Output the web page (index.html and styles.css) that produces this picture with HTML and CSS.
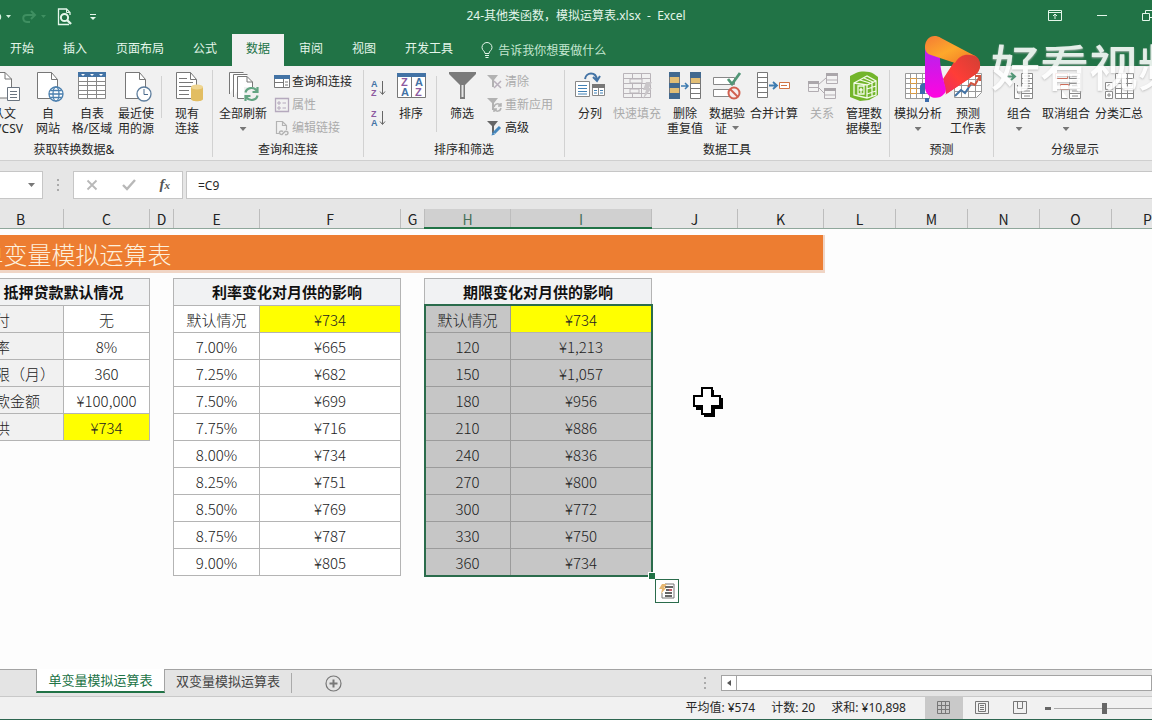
FILE: index.html
```html
<!DOCTYPE html>
<html lang="zh-CN">
<head>
<meta charset="utf-8">
<title>24-其他类函数，模拟运算表.xlsx - Excel</title>
<link rel="stylesheet" href="styles.css">
</head>
<body>
<div class="app">
  <header class="top">
    <div class="titlebar">
      <div class="quick">
        <button class="qbtn undo" aria-label="撤消"><svg width="14" height="16" viewBox="0 0 14 16"><path d="M-1 5c3 1 3 5 0 6" fill="none" stroke="#d5f0de" stroke-width="2"/><path d="M7 6h5l-2.500 3z" fill="#d5f0de"/></svg></button>
        <button class="qbtn" aria-label="恢复"><svg width="28" height="16" viewBox="0 0 28 16"><path d="M9 13H6C1 12 1 6 6 6h7M10 2l4 4-4 4" fill="none" stroke="#3f8f61" stroke-width="2"/><path d="M20 6h5l-2.500 3z" fill="#3f8f61"/></svg></button>
        <button class="qbtn" aria-label="打印预览"><svg width="16" height="18" viewBox="0 0 16 18" fill="none" stroke="#e4f6ea"><path d="M13 7V4.500L9.500 1H1.500v15.500H12" stroke-width="1.300"/><path d="M9.500 1v3.500H13"/><circle cx="7.500" cy="9.500" r="3.600" stroke-width="2"/><path d="M10 12l4 4" stroke-width="2.400"/></svg></button>
        <button class="qbtn more" aria-label="自定义"><svg width="8" height="8" viewBox="0 0 8 8"><path d="M1 1.500h6" stroke="#e4f6ea"/><path d="M1 4h6L4 7z" fill="#e4f6ea"/></svg></button>
      </div>
      <div class="doc">24-其他类函数，模拟运算表.xlsx&nbsp; -&nbsp; Excel</div>
      <div class="window">
        <button aria-label="功能区选项"><svg width="14" height="11" viewBox="0 0 14 11" fill="none" stroke="#e4f6ea"><path d="M.5.5h13v10H.5zM.5 2.500h13M7 9V4M5 6l2-2 2 2"/></svg></button>
        <button aria-label="最小化"><svg width="12" height="11" viewBox="0 0 12 11"><path d="M1 5.500h10" stroke="#e4f6ea"/></svg></button>
        <button aria-label="还原"><svg width="12" height="11" viewBox="0 0 12 11" fill="none" stroke="#e4f6ea"><path d="M.5 3.500h7v7h-7zM3.500 3V.5h8v7H8"/></svg></button>
      </div>
    </div>
    <nav class="tabs">
      <button>开始</button><button>插入</button><button>页面布局</button><button>公式</button><button class="active">数据</button><button>审阅</button><button>视图</button><button>开发工具</button>
      <label class="tell"><svg width="12" height="17" viewBox="0 0 12 17" fill="none" stroke="#e4f6ea"><path d="M4 11.500C4 9 1 8.500 1 5.500a5 5 0 0 1 10 0c0 3-3 3.500-3 6zM4 13.500h4M4.500 15.500h3"/></svg><input type="text" placeholder="告诉我你想要做什么"></label>
    </nav>
  </header>

  <section class="ribbon">
    <div class="group g1">
      <div class="tools">
        <button class="big w44"><svg width="32" height="32" viewBox="0 0 32 32" fill="#fff" stroke="#777"><path d="M1.500 2.500H17L23.500 9v19h-22z"/><path d="M17 2.500V9h6.500" fill="none"/><path d="M19.500 17.500h12v13h-12zM22 21.500h7M22 24.500h7M22 27.500h7" stroke="#6a7480"/></svg><span>从文<br>本/CSV</span></button>
        <button class="big w44"><svg width="32" height="32" viewBox="0 0 32 32" fill="#fff" stroke="#777"><path d="M5.500 2.500h14l6 7v19h-20z"/><path d="M19.500 2.500v7h6" fill="none"/><g stroke="#4a7fae" stroke-width="1.300"><circle cx="24" cy="24" r="7"/><ellipse cx="24" cy="24" rx="3" ry="7"/><path d="M17 24h14M18.500 20.500h11M18.500 27.500h11"/></g></svg><span>自<br>网站</span></button>
        <button class="big w44"><svg width="32" height="32" viewBox="0 0 32 32" fill="#fff" stroke="#888"><path d="M2.500 2.500h27v26h-27z"/><path d="M2 2h28v5H2z" fill="#4373a5" stroke="none"/><path d="M2.500 11.500h27M2.500 15.500h27M2.500 20.500h27M2.500 24.500h27M11.500 7v21M20.500 7v21"/><path d="M5 4h4L7 6zM14 4h4l-2 2zM23 4h4l-2 2z" stroke="none"/></svg><span>自表<br>格/区域</span></button>
        <button class="big w44"><svg width="32" height="32" viewBox="0 0 32 32" fill="#fff" stroke="#777"><path d="M5.500 2.500h14l6 7v19h-20z"/><path d="M19.500 2.500v7h6" fill="none"/><circle cx="24" cy="24" r="7" stroke="#5d7d9d" stroke-width="1.300"/><path d="M24 19v5.500h4" fill="none" stroke="#4a6a8c"/></svg><span>最近使<br>用的源</span></button>
        <i class="rule short"></i>
        <button class="big w44"><svg width="32" height="32" viewBox="0 0 32 32" fill="#fff" stroke="#777"><path d="M5.500 2.500h14l6 7v19h-20z"/><path d="M19.500 2.500v7h6M8 8.500h8M8 12.500h14M8 16.500h14M8 20.500h10M8 24.500h10" fill="none"/><path d="M20 17v12c0 3 12 3 12 0V17z" fill="#e2bd62" stroke="none"/><ellipse cx="26" cy="17" rx="6" ry="2.500" fill="#efd591" stroke="none"/></svg><span>现有<br>连接</span></button>
      </div>
      <h2>获取转换数据&amp;</h2>
    </div>
    <div class="group g2">
      <div class="tools">
        <button class="big w54"><svg width="32" height="32" viewBox="0 0 32 32" fill="#fff" stroke="#777"><path d="M2.500 24V2.500h14M6.500 27V4.500h14M10.500 6.500H20l5.500 5.500v16.500h-15z"/><path d="M20 6.500V12h5.500" fill="none"/><path d="M17 17h15v14H17z" fill="#f1f1f1" stroke="none"/><path d="M18.500 22.500c1-5 8-6 11-2M30.500 17v5h-5M30.500 25.500c-1 5-8 6-11 2M18.500 31v-5h5" fill="none" stroke="#64a583" stroke-width="2.200"/></svg><span>全部刷新</span><b class="caret"></b></button>
        <div class="stack">
          <button><svg width="16" height="16" viewBox="0 0 16 16" fill="#fff" stroke="#777"><path d="M.5 1.500h15v12H.5z"/><path d="M0 1h16v4H0z" fill="#4373a5" stroke="none"/><path d="M9.500 5v8.500M.5 8.500h9M11 8h3M11 11h3" fill="none"/></svg>查询和连接</button>
          <button disabled><svg width="16" height="16" viewBox="0 0 16 16" fill="none" stroke="#b5a9bd"><path d="M1.500 1.500h13v13h-13z" stroke-width="1.300"/><path d="M4 5h2v2H4zM4 10h2v2H4zM8.500 6H12M8.500 11H12"/></svg>属性</button>
          <button disabled><svg width="16" height="16" viewBox="0 0 16 16" fill="none" stroke="#b3b3b3"><path d="M5 13.500H2.500V1.500h6l4 4V10M8.500 1.500v4h4" stroke-width="1.200"/><path d="M9 11.500c-4-2-5 3-1 3l3-3c4-1 4 4 0 3" stroke-width="1.500"/></svg>编辑链接</button>
        </div>
      </div>
      <h2>查询和连接</h2>
    </div>
    <div class="group g3">
      <div class="tools">
        <div class="sorts">
          <button aria-label="升序"><svg width="16" height="18" viewBox="0 0 16 18"><text class="az blue" x="0" y="8">A</text><text class="az purple" x="0" y="17">Z</text><path d="M11.500 2v13M9 12.500l2.500 3 2.500-3" fill="none" stroke="#666"/></svg></button>
          <button aria-label="降序"><svg width="16" height="18" viewBox="0 0 16 18"><text class="az purple" x="0" y="8">Z</text><text class="az blue" x="0" y="17">A</text><path d="M11.500 2v13M9 12.500l2.500 3 2.500-3" fill="none" stroke="#666"/></svg></button>
        </div>
        <button class="big w44"><svg width="32" height="32" viewBox="0 0 32 32" fill="#fff" stroke="#777"><path d="M2.500 3.500h28v24h-28zM16.500 6v21"/><path d="M2 3h29v4H2z" fill="#4373a5" stroke="none"/><g stroke="none"><text class="za purple" x="6" y="16">Z</text><text class="za blue" x="6" y="26">A</text><text class="za blue" x="20" y="16">A</text><text class="za purple" x="20" y="26">Z</text></g></svg><span>排序</span></button>
        <i class="rule"></i>
        <button class="big w44"><svg width="32" height="32" viewBox="0 0 32 32"><path d="M3 2h27v2L19 15v14h-5V15L3 4z" fill="#7b7b7b"/><path d="M16.500 15v12" stroke="#e5e5e5" stroke-width="2"/></svg><span>筛选</span></button>
        <div class="stack">
          <button disabled><svg width="16" height="16" viewBox="0 0 16 16"><path d="M0 1h11L7 6v7H5V6z" fill="#b2b2b2"/><path d="M7 7l7 7M14 7l-7 7" stroke="#b9b0bc" stroke-width="1.500"/></svg>清除</button>
          <button disabled><svg width="16" height="16" viewBox="0 0 16 16"><path d="M0 1h11L7 6v7H5V6z" fill="#b2b2b2"/><path d="M7 10c1-4 5-4 7-1M14 6v3h-3M14 11c-1 4-5 4-7 1M7 15v-3h3" fill="none" stroke="#b2b2b2" stroke-width="1.500"/></svg>重新应用</button>
          <button><svg width="16" height="16" viewBox="0 0 16 16"><path d="M0 1h11L7 6v7H5V6z" fill="#666"/><path d="M7 13l6-6" stroke="#4587bd" stroke-width="3"/><path d="M4.500 15.500l1-3.500 2.500 2.500z" fill="#4587bd"/></svg>高级</button>
        </div>
      </div>
      <h2>排序和筛选</h2>
    </div>
    <div class="group g4">
      <div class="tools">
        <button class="big w44"><svg width="32" height="32" viewBox="0 0 32 32" fill="#fff" stroke="#888"><path d="M1.500 11.500h14v15h-14zM18.500 15.500h12v10h-12zM24.500 17v8"/><path d="M18 14h13v4H18z" fill="#777" stroke="none"/><path d="M4 15.500h9M4 18.500h9M4 21.500h9M4 24h9M20 20.500h3M20 23h3M26 20.500h3M26 23h3" stroke="#4382b6"/><path d="M11 9c1-7 11-8 12 1M19 7l4 4 3-5" fill="none" stroke="#4373a5" stroke-width="2"/></svg><span>分列</span></button>
        <button class="big w50" disabled><svg width="32" height="32" viewBox="0 0 32 32" fill="none" stroke="#b9b4b9"><path d="M2.500 3.500h27v24h-27zM2.500 8.500h27M2.500 13.500h27M2.500 18.500h27M2.500 23.500h27M11.500 3v24M20.500 3v24"/><path d="M9 9h12v4H9zM9 19h9v4H9z" fill="#f1f1f1"/><path d="M25 12h6l-3 6h3l-9 11 3-9h-3z" fill="#c9c6c9" stroke="none"/></svg><span>快速填充</span></button>
        <button class="big w46"><svg width="32" height="32" viewBox="0 0 32 32" fill="#fff" stroke="#777"><path d="M.5 2.500h10v26H.5z" fill="#e2be75"/><path d="M21.500 2.500h10v26h-10z"/><path d="M0 2h11v5H0zM0 13h11v5H0zM0 23h11v6H0zM21 2h11v6H21z" fill="#42698f" stroke="none"/><path d="M22 8h9v5h-9z" fill="#e2be75" stroke="none"/><path d="M22 13.500h9M22 18.500h9M22 23.500h9"/><path d="M12 16h7M16 13l3 3-3 3" fill="none" stroke="#3e7cb1" stroke-width="1.500"/></svg><span>删除<br>重复值</span></button>
        <button class="big w38"><svg width="32" height="32" viewBox="0 0 32 32" fill="#fff" stroke="#888"><path d="M2.500 7.500h21v7h-21zM2.500 19.500h16v7h-16z"/><path d="M17 9l4 5 8-11" fill="none" stroke="#519676" stroke-width="2.800"/><circle cx="23" cy="23" r="5.500" stroke="#d16150" stroke-width="2" fill="#f7eeee"/><path d="M19 19l8 8" stroke="#d16150" stroke-width="2"/></svg><span>数据验<br>证 <b class="caret inline"></b></span></button>
        <button class="big w56"><svg width="34" height="32" viewBox="0 0 34 32" fill="#fff" stroke="#777"><path d="M.5 2.500h10v25H.5zM.5 7.500h10M.5 12.500h10M.5 17.500h10M.5 22.500h10"/><path d="M22.500 12.500h10v6h-10z" stroke="#d07444"/><path d="M24 15.500h6" stroke="#d07444"/><path d="M12 15.500h7M16 12l4 3.500-4 3.500" fill="none" stroke="#3e7cb1" stroke-width="1.800"/></svg><span>合并计算</span></button>
        <button class="big w40" disabled><svg width="32" height="32" viewBox="0 0 32 32" fill="#f3f3f3" stroke="#b2adb2"><path d="M12 15l8-7M12 17l6 6"/><path d="M2.500 11.500h10v10h-10zM20.500 3.500h11v10h-11zM18.500 18.500h11v10h-11zM2.500 17.500h10M20.500 10h11M18.500 25h11"/><path d="M2 11h11v3H2zM20 3h12v3H20zM18 18h12v3H18z" fill="#aaa6aa" stroke="none"/></svg><span>关系</span></button>
        <button class="big w44"><svg width="32" height="32" viewBox="0 0 32 32"><path d="M2 6l6-3c5-2 13-2 18 1l4 3v18l-9 5-9 1L2 27z" fill="#73b52b"/><path d="M6 13l13-7 9 5v14l-9 3-13-3zM6 13l13 2 9-4M19 15v13M24 13v13M19 19l9-3M19 24l9-3M12 10l10 3M16 8l9 4M10 16h6v8h-6zM13 23v-4M11.500 20.500l1.500-2 1.500 2" fill="none" stroke="#f2fae7" stroke-width="1.300"/></svg><span>管理数<br>据模型</span></button>
      </div>
      <h2>数据工具</h2>
    </div>
    <div class="group g5">
      <div class="tools">
        <button class="big w50"><svg width="32" height="32" viewBox="0 0 32 32" fill="#fff" stroke="#999"><path d="M3.500 3.500h24v25h-24zM3.500 8.500h24M3.500 13.500h24M3.500 18.500h24M3.500 23.500h24M8.500 3v25M14.500 3v25M20.500 3v25"/><path d="M8.500 8.500h6v5h-6zM8.500 18.500h6v5h-6z" stroke="#d99a43"/><path d="M18 17c0-3 2-4 5-4v11h-5zM23 28h4v4h-4z" fill="#3d6cab" stroke="none"/></svg><span>模拟分析</span><b class="caret"></b></button>
        <button class="big w50"><svg width="32" height="32" viewBox="0 0 32 32" fill="#fff" stroke="#999"><path d="M2.500 3.500h27v19l-5 5h-22zM2.500 9.500h27M2.500 15.500h27M2.500 21.500h27M9.500 3v24M16.500 3v24M23.500 3v24"/><path d="M3 26l6-6 4 3 6-9" fill="none" stroke="#4373a5" stroke-width="2"/><path d="M16 17l3-4 4 2 5-9M23 6h5v5" fill="none" stroke="#d15540" stroke-width="2"/></svg><span>预测<br>工作表</span></button>
      </div>
      <h2>预测</h2>
    </div>
    <div class="group g6">
      <div class="tools">
        <button class="big w44"><svg width="32" height="32" viewBox="0 0 32 32" fill="#fff" stroke="#888"><path d="M18.500 3.500h11v25h-11zM18.500 8.500h11M18.500 13.500h11M18.500 18.500h11M18.500 23.500h11M11.500 13v15.500h5M14.500 15v8h3"/><path d="M21 11h6M21 16h6M21 21h6M21 26h6M21 6h6"/><path d="M4 6.500h8M8 3l4 3.500L8 10" fill="none" stroke="#519676" stroke-width="2"/></svg><span>组合</span><b class="caret"></b></button>
        <button class="big w50"><svg width="32" height="32" viewBox="0 0 32 32" fill="#fff" stroke="#888"><path d="M19.500 3.500h11v25h-11zM19.500 8.500h11M19.500 13.500h11M19.500 18.500h11M19.500 23.500h11M22 6h6M22 11h6M22 16h6M22 21h6M22 26h6M11.500 20v8.500h6"/><path d="M5.500 3.500h12v5h-12zM10.500 14.500h8v5h-8z" stroke="#cf6652"/></svg><span>取消组合</span><b class="caret"></b></button>
        <button class="big w56"><svg width="32" height="32" viewBox="0 0 32 32" fill="#fff" stroke="#888"><path d="M12.500 3.500h18v25h-18zM12.500 8.500h18M12.500 13.500h18M12.500 18.500h18M12.500 23.500h18M18.500 3v25M24.500 3v25M2.500 12.500h7v7h-7zM2.500 21.500h7v7h-7zM4 16h4M6 14v4M4 25h4M6 23v4"/></svg><span>分类汇总</span></button>
      </div>
      <h2>分级显示</h2>
    </div>
  </section>

  <div class="formula">
    <button class="name" aria-label="名称框"><b class="caret"></b></button>
    <i class="dots"></i>
    <div class="fx">
      <button aria-label="取消"><svg width="12" height="12" viewBox="0 0 12 12"><path d="M1.500 1.500l9 9M10.500 1.500l-9 9" stroke="#b8b8b8" stroke-width="1.800"/></svg></button>
      <button aria-label="输入"><svg width="14" height="12" viewBox="0 0 14 12"><path d="M1 6l4 4 8-9" fill="none" stroke="#b8b8b8" stroke-width="2.400"/></svg></button>
      <button class="fn" aria-label="插入函数">f<small>x</small></button>
    </div>
    <input class="expr" type="text" value="=C9" aria-label="编辑栏">
  </div>

  <main class="sheet">
    <table class="grid">
      <colgroup><col class="m"><col class="m"><col class="s"><col class="m"><col class="l"><col class="s"><col class="m"><col class="l"><col class="m"><col class="m"><col class="d"><col class="d"><col class="d"><col class="d"><col class="d"></colgroup>
      <thead><tr><th>B</th><th>C</th><th>D</th><th>E</th><th>F</th><th>G</th><th class="on">H</th><th class="on">I</th><th>J</th><th>K</th><th>L</th><th>M</th><th>N</th><th>O</th><th>P</th></tr></thead>
      <tbody>
        <tr class="gap"><td colspan="15"></td></tr>
        <tr class="banner"><td colspan="10">单变量模拟运算表</td><td class="off" colspan="5"></td></tr>
        <tr class="gap"><td colspan="15"></td></tr>
        <tr class="heads"><td class="c h" colspan="2">抵押贷款默认情况</td><td></td><td class="c h" colspan="2">利率变化对月供的影响</td><td></td><td class="c h" colspan="2">期限变化对月供的影响</td></tr>
        <tr><td class="c k">首付</td><td class="c">无</td><td></td><td class="c">默认情况</td><td class="c y">¥734</td><td></td><td class="c sel">默认情况</td><td class="c y">¥734</td></tr>
        <tr><td class="c k">利率</td><td class="c">8%</td><td></td><td class="c">7.00%</td><td class="c">¥665</td><td></td><td class="c sel">120</td><td class="c sel">¥1,213</td></tr>
        <tr><td class="c k">期限（月）</td><td class="c">360</td><td></td><td class="c">7.25%</td><td class="c">¥682</td><td></td><td class="c sel">150</td><td class="c sel">¥1,057</td></tr>
        <tr><td class="c k">贷款金额</td><td class="c">¥100,000</td><td></td><td class="c">7.50%</td><td class="c">¥699</td><td></td><td class="c sel">180</td><td class="c sel">¥956</td></tr>
        <tr><td class="c k">月供</td><td class="c y">¥734</td><td></td><td class="c">7.75%</td><td class="c">¥716</td><td></td><td class="c sel">210</td><td class="c sel">¥886</td></tr>
        <tr><td></td><td></td><td></td><td class="c">8.00%</td><td class="c">¥734</td><td></td><td class="c sel">240</td><td class="c sel">¥836</td></tr>
        <tr><td></td><td></td><td></td><td class="c">8.25%</td><td class="c">¥751</td><td></td><td class="c sel">270</td><td class="c sel">¥800</td></tr>
        <tr><td></td><td></td><td></td><td class="c">8.50%</td><td class="c">¥769</td><td></td><td class="c sel">300</td><td class="c sel">¥772</td></tr>
        <tr><td></td><td></td><td></td><td class="c">8.75%</td><td class="c">¥787</td><td></td><td class="c sel">330</td><td class="c sel">¥750</td></tr>
        <tr><td></td><td></td><td></td><td class="c">9.00%</td><td class="c">¥805</td><td></td><td class="c sel">360</td><td class="c sel">¥734</td></tr>
      </tbody>
    </table>
    <div class="selection"><i class="handle"></i>
      <button class="quickfx" aria-label="快速分析"><svg width="16" height="16" viewBox="0 0 16 16"><path d="M6 1h9v14H3v-5" fill="none" stroke="#777"/><path d="M6 4h8M7 7h3M6 10h7M6 13h7" stroke="#666" stroke-width="2"/><path d="M10 7h3" stroke="#c75b67" stroke-width="2"/><path d="M3 1h5L5 5h2l-5 6 1-5H0z" fill="#e6b873"/></svg></button>
    </div>
    <svg class="cursor" width="32" height="32" viewBox="0 0 32 32"><path d="M13 4h10v8h9v11h-8v8H13v-7H5V13h8z" fill="#000"/><path d="M11 2h10v8h8v10h-8v8H11v-8H3V10h8z" fill="#fff" stroke="#000" stroke-width="2"/></svg>
  </main>

  <footer>
    <div class="sheets">
      <button class="active">单变量模拟运算表</button>
      <button>双变量模拟运算表</button>
      <i class="bar"></i>
      <button class="add" aria-label="新工作表"><svg width="17" height="17" viewBox="0 0 17 17" fill="none" stroke="#777"><circle cx="8.500" cy="8.500" r="7.500" stroke-width="1.200"/><path d="M8.500 4.500v8M4.500 8.500h8" stroke-width="2"/></svg></button>
      <i class="dots"></i>
      <div class="hscroll"><button aria-label="向左滚动"></button><div></div></div>
    </div>
    <div class="status">
      <span>平均值: ¥574</span><span>计数: 20</span><span>求和: ¥10,898</span>
      <div class="views">
        <button class="active" aria-label="普通"><svg width="14" height="14" viewBox="0 0 14 14" fill="none" stroke="#777"><path d="M.5.5h12v12H.5zM4.500 0v13M8.500 0v13M0 4.500h13M0 8.500h13"/></svg></button>
        <button aria-label="页面布局"><svg width="14" height="14" viewBox="0 0 14 14" fill="none" stroke="#777"><path d="M.5.5h13v12H.5zM3.500 2.500h7v8h-7zM5 4.500h4M5 6.500h4M5 8.500h4"/></svg></button>
        <button aria-label="分页预览"><svg width="14" height="14" viewBox="0 0 14 14" fill="none" stroke="#777"><path d="M.5.5h13v12H.5zM4.500.5v7h5v-7"/></svg></button>
      </div>
      <button class="minus" aria-label="缩小"></button>
      <input class="zoom" type="range" value="50" aria-label="缩放">
    </div>
  </footer>

  <div class="mark">
    <svg width="58" height="64" viewBox="0 0 58 64"><defs><linearGradient id="o" x1="0" y1="0" x2="1" y2="1"><stop offset="0" stop-color="#f47b35"/><stop offset=".5" stop-color="#fda82b"/><stop offset="1" stop-color="#f17426"/></linearGradient><linearGradient id="r" x1="1" y1="0" x2="0" y2="1"><stop offset="0" stop-color="#cf4034"/><stop offset=".6" stop-color="#ff3d37"/><stop offset="1" stop-color="#ed2c62"/></linearGradient><linearGradient id="p" x1="0" y1="0" x2="0" y2="1"><stop offset="0" stop-color="#b025ee"/><stop offset="1" stop-color="#ff04e0"/></linearGradient></defs><path d="M23 58L49 20c6 1 9 9 6 15-1 3-3 4-6 6L21 60z" fill="url(#r)"/><path d="M32 24c5-7 12-7 17-4 9 4 9 14 3 19L22 59l-3-15z" fill="url(#r)"/><path d="M1 10v43c1 10 13 13 19 6 2-2 2-5 1-8-2-9-5-17-5-28z" fill="url(#p)"/><path d="M1 12C1 3 9-2 17 3l36 19c-9-4-17-3-22 6L7 20c-4-1-6-4-6-8z" fill="url(#o)"/></svg>
    <span>好看视频</span>
  </div>
</div>
</body>
</html>
```
FILE: styles.css
```css
* { box-sizing: border-box; }
body { margin: 0; overflow: hidden; font: 12px/15px "Noto Sans", "Noto Sans CJK SC", sans-serif; color: #262626; }
button, input { font: inherit; color: inherit; margin: 0; padding: 0; border: 0; background: none; }
h2 { margin: 0; font: inherit; text-align: center; }
svg { display: block; flex: none; }
.app { position: relative; display: flex; flex-direction: column; height: 100vh; overflow: hidden; border-bottom: 1px solid #2d6650; }

.top { background: #217346; color: #e4f6ea; }
.titlebar { display: grid; grid-template-columns: 1fr auto 1fr; align-items: center; height: 34px; }
.quick { display: flex; align-items: center; gap: 8px; margin-left: -1px; }
.quick .more { margin-left: 8px; }
.window { display: flex; justify-content: flex-end; gap: 34px; margin-right: -2px; padding-bottom: 3px; }
.doc { padding-bottom: 4px; }
.tabs { display: flex; gap: 1px; height: 32px; margin-left: -4px; }
.tabs button { padding: 0 14px 3px; }
.tabs .active { background: #f1f1f1; color: #217346; }
.tell { display: flex; align-items: center; gap: 5px; margin-left: 13px; }
.tell input { width: 140px; }
.tell input::placeholder { color: #c4e6d0; opacity: 1; }

.ribbon { display: flex; height: 95px; background: #f1f1f1; border-bottom: 1px solid #cfcfcf; }
.group { display: flex; flex: none; flex-direction: column; justify-content: space-between; margin: 4px 0 3px; border-right: 1px solid #d2d2d2; }
.g1 { width: 277px; margin-left: -64px; }
.g2 { width: 151px; }
.g3 { width: 201px; }
.g4 { width: 325px; }
.g5 { width: 104px; }
.g6 { width: 162px; border: 0; }
.tools { display: flex; padding-left: 3px; }
.g1 .tools { padding-left: 46px; }
.g3 .tools { padding-left: 7px; }
.big { display: flex; flex: none; flex-direction: column; align-items: center; height: 66px; white-space: nowrap; }
.big span { margin-top: 4px; }
.w38 { width: 38px; }
.w40 { width: 40px; }
.w44 { width: 44px; }
.w46 { width: 46px; }
.w50 { width: 50px; }
.w54 { width: 54px; }
.w56 { width: 56px; }
button:disabled { color: #ababab; }
.caret { display: block; flex: none; width: 7px; height: 4px; margin-top: 6px; background: #777; clip-path: polygon(0 0, 100% 0, 50% 100%); }
.caret.inline { display: inline-block; margin: 0 0 3px 2px; }
.rule { width: 1px; height: 56px; margin: 6px 3px 0; background: #d2d2d2; }
.rule.short { height: 42px; }
.stack { display: flex; flex-direction: column; padding-left: 3px; }
.stack button { display: flex; align-items: center; gap: 2px; height: 23px; white-space: nowrap; }
.g2 .stack { padding-left: 4px; }
.sorts { display: flex; flex-direction: column; gap: 12px; width: 18px; padding-top: 9px; }
.az { font: bold 9px "Liberation Sans", sans-serif; }
.za { font: bold 11px "Liberation Sans", sans-serif; }
.blue { fill: #4373a5; }
.purple { fill: #8d5aa0; }

.formula { display: flex; height: 48px; padding: 10px 0; background: #e6e6e6; }
.formula > * { border: 1px solid #c6c6c6; background: #fff; }
.name { display: flex; align-items: center; justify-content: flex-end; width: 43px; padding-right: 7px; }
.formula .name { border-left: 0; }
.name .caret { margin: 0; }
.formula .dots, .dots { width: 2px; height: 12px; border: 0; background: repeating-linear-gradient(#aaa 0 2px, transparent 2px 5px); }
.formula .dots { margin: 8px 14px; }
.fx { display: flex; align-items: center; justify-content: space-around; width: 110px; margin-right: 3px; }
.formula .fn { font: italic bold 15px/15px "Liberation Serif", serif; color: #555; }
.fn small { font-size: 11px; }
.expr { flex: 1; min-width: 0; padding: 0 11px; }
.formula .expr { border-right: 0; }

.sheet { position: relative; flex: 1; min-height: 0; overflow: hidden; background: #fdfdfd; font-family: "Noto Sans CJK SC", sans-serif; }
.grid { width: 1206px; margin-left: -23px; table-layout: fixed; border-collapse: collapse; font-size: 15px; line-height: 20px; color: #222; }
.s { width: 24px; }
.m { width: 86px; }
.l { width: 141px; }
.d { width: 72px; }
.grid th { height: 19px; padding: 2px 0 0; background: #e6e6e6; border: solid #bdbdbd; border-width: 0 1px; border-bottom: 1px solid #8fa79b; font-size: 14px; font-weight: 400; line-height: 15px; }
.grid th.on { background: #d0d0d0; color: #46705a; border-bottom: 2px solid #217346; }
.grid td { height: 27px; padding: 2px 2px 0; font-weight: 300; white-space: nowrap; }
.grid .gap td { height: 7px; padding: 0; }
.grid .banner td { height: 36px; background: #ed7d31; border: solid #f0d5c5; border-width: 0 2px 3px 0; color: #fdf0dc; font-size: 24px; line-height: 31px; }
.grid .banner .off { background: none; border: 0; }
.grid .c { border: 1px solid #b4b4b4; text-align: center; background: #fff; }
.grid .h { padding-top: 0; background: #f1f2f3; font-weight: 700; color: #111; }
.grid .k { background: #f1f1f1; text-align: left; }
.grid .y { background: #ffff00; }
.grid .sel { background: #c6c6c6; border-color: #9b9b9b; }
.selection { position: absolute; left: 424px; top: 95px; width: 229px; height: 273px; border: 2px solid #2b6c4c; pointer-events: none; }
.handle { position: absolute; right: -4px; bottom: -4px; width: 7px; height: 7px; background: #217346; border: solid #fff; border-width: 1px 0 0 1px; }
.quickfx { position: absolute; left: 229px; top: 273px; display: grid; place-items: center; width: 24px; height: 24px; border: 1px solid #2b6c4c; background: #fff; }
.cursor { position: absolute; left: 691px; top: 177px; }

.sheets { display: flex; align-items: center; height: 28px; padding-left: 36px; background: #e4e4e4; border: solid #a3a3a3; border-width: 1px 0; border-bottom-color: #c9c9c9; font-size: 13px; line-height: 18px; color: #444; }
.sheets > button { flex: none; height: 25px; padding: 0 11px; margin-bottom: 4px; white-space: nowrap; }
.sheets > .active { width: 129px; padding: 1px 10px 0; margin-top: -1px; background: #fff; border: solid #a3a3a3; border-width: 0 1px; border-bottom: 2px solid #217346; color: #217346; }
.bar { width: 1px; height: 20px; background: #aaa; }
.sheets .add { margin: 0 0 0 22px; }
.sheets .dots { margin-left: auto; }
.hscroll { display: flex; width: 431px; height: 16px; margin-left: 15px; border: 1px solid #a3a3a3; background: #fff; }
.hscroll button { display: grid; place-items: center; width: 15px; border-right: 1px solid #a3a3a3; }
.hscroll button::before { content: ""; width: 4px; height: 6px; background: #555; clip-path: polygon(100% 0, 100% 100%, 0 50%); }
.status { display: flex; align-items: center; justify-content: flex-end; gap: 16px; height: 22px; background: #f1f1f1; }
.status span { padding-bottom: 2px; }
.views { display: flex; align-self: stretch; margin-left: 3px; }
.views button { display: grid; place-items: center; width: 38px; }
.views .active { background: #c9c9c9; }
.minus { width: 6px; height: 3px; margin-left: -10px; }
.status .minus { background: #666; }
.zoom { width: 100px; height: 16px; margin: 0 -2px 0 -13px; appearance: none; }
.zoom::-webkit-slider-runnable-track { height: 11px; background: linear-gradient(#aaa, #aaa) center / 100% 1px no-repeat; }
.zoom::-webkit-slider-thumb { appearance: none; width: 5px; height: 11px; background: #666; }

.mark { position: absolute; left: 924px; top: 35px; display: flex; gap: 9px; pointer-events: none; }
.mark span { color: #fff; opacity: .88; font: 500 49px/60px "Noto Sans CJK SC", sans-serif; white-space: nowrap; text-shadow: 0 1px 2px #bbb; }
```
